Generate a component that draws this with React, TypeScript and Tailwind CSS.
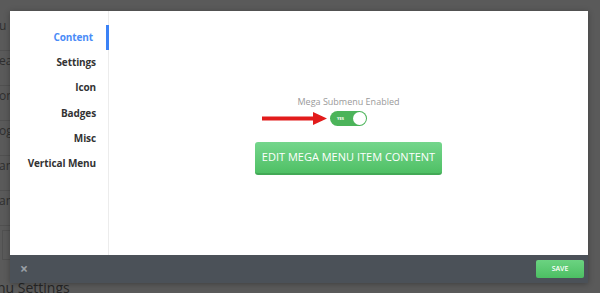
import React from "react";

const navItems = ["Content", "Settings", "Icon", "Badges", "Misc", "Vertical Menu"];
const bgRows = ["u M", "ea", "om", "og", "am", "am"];

export default function App() {
  return (
    <div
      className="relative h-[293px] w-[600px] overflow-hidden bg-[#5a5a5a]"
      style={{ fontFamily: '"Open Sans", "Liberation Sans", sans-serif' }}
    >
      {/* dimmed page behind the modal */}
      <div className="flex h-full flex-col">
        <div className="flex w-[40px] flex-col pt-[16px]">
          {bgRows.map((t, i) => (
            <div
              key={i}
              className="flex h-[35px] items-start border-b border-[#505050] pt-[2px] text-[12px] leading-[16px] text-[#2f2f2f]"
            >
              <span className="-ml-[1px]">{t}</span>
            </div>
          ))}
          <div className="mt-[4px] ml-[2px] h-[30px] w-[20px] border border-[#505050]" />
        </div>
        <div className="mt-auto -mb-[3px] -ml-[3px] text-[14px] leading-[16px] text-[#262626]">nu Settings</div>
      </div>

      {/* modal */}
      <div className="absolute left-[10px] top-[11px] flex w-[578px] flex-col shadow-[0_1px_6px_rgba(0,0,0,0.3)]">
        <div className="flex h-[244px] bg-white">
          <aside className="flex w-[99px] flex-col border-r border-[#ececec] pt-[14px]">
            {navItems.map((item, i) => (
              <div
                key={item}
                className={
                  "relative -mr-px flex h-[25.2px] items-center justify-end pr-[13px] text-[10px] font-bold tracking-[-0.1px] " +
                  (i === 0 ? "border-r-[3px] border-[#3b82f6] pr-[10px] text-[#4a8cf7]" : "text-[#333]")
                }
              >
                {item}
              </div>
            ))}
          </aside>
          <main className="relative flex flex-1 flex-col items-center pt-[85px]">
            <p className="text-[9px] leading-[12px] text-[#9a9a9a]">Mega Submenu Enabled</p>
            <div className="relative mt-[3px]">
              <div className="flex h-[15px] w-[37px] items-center justify-between rounded-full bg-[#4cb45a] pl-[7px] pr-[1px]">
                <span className="text-[4px] font-bold leading-none text-white">YES</span>
                <span className="h-[13px] w-[13px] rounded-full bg-white" />
              </div>
              <svg
                className="absolute left-[-68px] top-[1px]"
                width="66"
                height="13"
                viewBox="0 0 66 13"
              >
                <path d="M0 4.5 H51 V0 L65 6.5 L51 13 V8.5 H0 Z" fill="#e21b1b" />
              </svg>
            </div>
            <button className="mt-[16px] flex h-[33px] w-[187px] items-center justify-center rounded-[3px] border-b-2 border-[#43a956] bg-gradient-to-b from-[#74d68c] to-[#4fc065] text-[11px] text-white">
              EDIT MEGA MENU ITEM CONTENT
            </button>
          </main>
        </div>
        <footer className="flex h-[28px] items-center justify-between bg-[#4b5158] pl-[10px] pr-[4px]">
          <span className="text-[14px] font-bold leading-none text-[#9aa0a6]">×</span>
          <button className="flex h-[18px] w-[48px] items-center justify-center rounded-[2px] bg-gradient-to-b from-[#6bd381] to-[#4cbf63] text-[7px] font-semibold text-white">
            SAVE
          </button>
        </footer>
      </div>
    </div>
  );
}
